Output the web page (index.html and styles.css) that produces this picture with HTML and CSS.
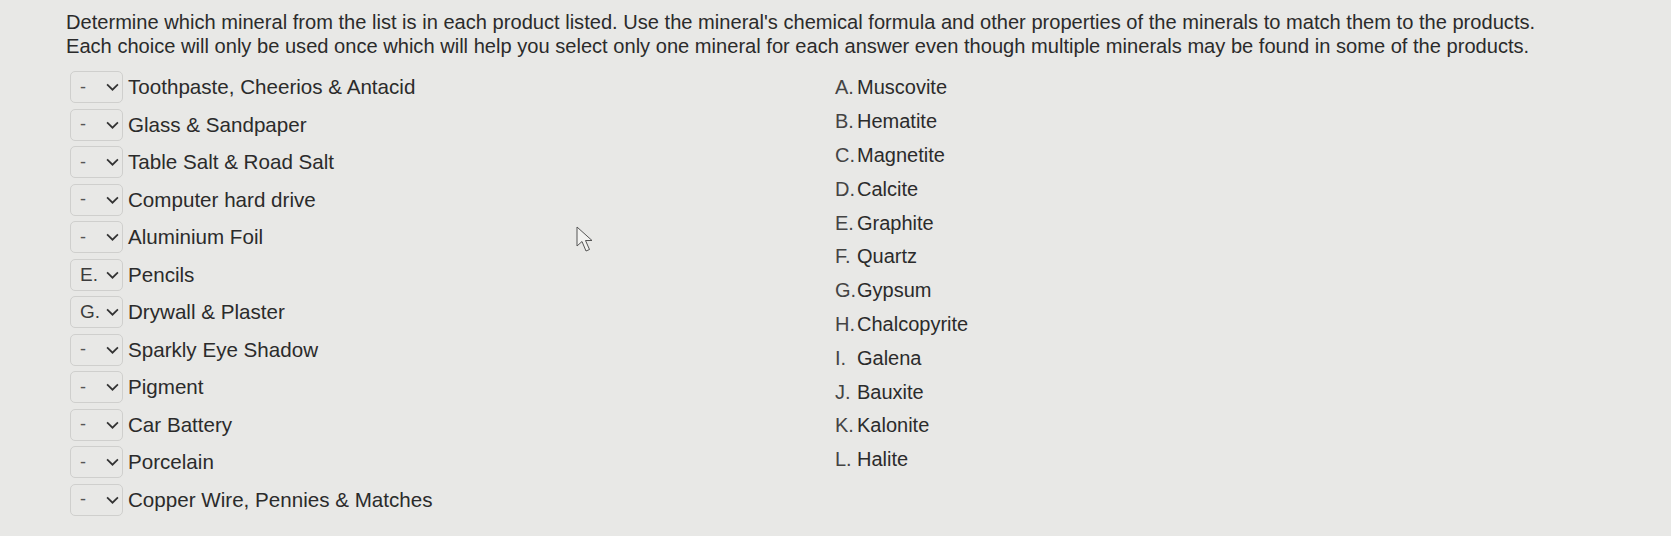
FILE: index.html
```html
<!DOCTYPE html>
<html lang="en">
<head>
<meta charset="utf-8">
<title>Mineral matching</title>
<link rel="stylesheet" href="styles.css">
</head>
<body>
<div class="page">
  <p class="intro">Determine which mineral from the list is in each product listed. Use the mineral's chemical formula and other properties of the minerals to match them to the products.<br>Each choice will only be used once which will help you select only one mineral for each answer even though multiple minerals may be found in some of the products.</p>
  <div class="match">
    <ul class="products">
      <li class="row"><span class="select"><span class="val">-</span><svg class="chev" viewBox="0 0 12 7"><polyline points="1,1 6,6 11,1"/></svg></span><span class="label">Toothpaste, Cheerios &amp; Antacid</span></li>
      <li class="row"><span class="select"><span class="val">-</span><svg class="chev" viewBox="0 0 12 7"><polyline points="1,1 6,6 11,1"/></svg></span><span class="label">Glass &amp; Sandpaper</span></li>
      <li class="row"><span class="select"><span class="val">-</span><svg class="chev" viewBox="0 0 12 7"><polyline points="1,1 6,6 11,1"/></svg></span><span class="label">Table Salt &amp; Road Salt</span></li>
      <li class="row"><span class="select"><span class="val">-</span><svg class="chev" viewBox="0 0 12 7"><polyline points="1,1 6,6 11,1"/></svg></span><span class="label">Computer hard drive</span></li>
      <li class="row"><span class="select"><span class="val">-</span><svg class="chev" viewBox="0 0 12 7"><polyline points="1,1 6,6 11,1"/></svg></span><span class="label">Aluminium Foil</span></li>
      <li class="row"><span class="select"><span class="val set">E.</span><svg class="chev" viewBox="0 0 12 7"><polyline points="1,1 6,6 11,1"/></svg></span><span class="label">Pencils</span></li>
      <li class="row"><span class="select"><span class="val set">G.</span><svg class="chev" viewBox="0 0 12 7"><polyline points="1,1 6,6 11,1"/></svg></span><span class="label">Drywall &amp; Plaster</span></li>
      <li class="row"><span class="select"><span class="val">-</span><svg class="chev" viewBox="0 0 12 7"><polyline points="1,1 6,6 11,1"/></svg></span><span class="label">Sparkly Eye Shadow</span></li>
      <li class="row"><span class="select"><span class="val">-</span><svg class="chev" viewBox="0 0 12 7"><polyline points="1,1 6,6 11,1"/></svg></span><span class="label">Pigment</span></li>
      <li class="row"><span class="select"><span class="val">-</span><svg class="chev" viewBox="0 0 12 7"><polyline points="1,1 6,6 11,1"/></svg></span><span class="label">Car Battery</span></li>
      <li class="row"><span class="select"><span class="val">-</span><svg class="chev" viewBox="0 0 12 7"><polyline points="1,1 6,6 11,1"/></svg></span><span class="label">Porcelain</span></li>
      <li class="row"><span class="select"><span class="val">-</span><svg class="chev" viewBox="0 0 12 7"><polyline points="1,1 6,6 11,1"/></svg></span><span class="label">Copper Wire, Pennies &amp; Matches</span></li>
    </ul>
    <ol class="minerals">
      <li><span class="letter">A.</span>Muscovite</li>
      <li><span class="letter">B.</span>Hematite</li>
      <li><span class="letter">C.</span>Magnetite</li>
      <li><span class="letter">D.</span>Calcite</li>
      <li><span class="letter">E.</span>Graphite</li>
      <li><span class="letter">F.</span>Quartz</li>
      <li><span class="letter">G.</span>Gypsum</li>
      <li><span class="letter">H.</span>Chalcopyrite</li>
      <li><span class="letter">I.</span>Galena</li>
      <li><span class="letter">J.</span>Bauxite</li>
      <li><span class="letter">K.</span>Kalonite</li>
      <li><span class="letter">L.</span>Halite</li>
    </ol>
  </div>
  <svg class="cursor" viewBox="0 0 18 28" width="18" height="28"><path d="M1 1 L1 20 L6 15.5 L10 25 L13.5 23.5 L9.5 14.5 L16 14.5 Z"/></svg>
</div>
</body>
</html>
```
FILE: styles.css
```css
html, body {
  margin: 0;
  padding: 0;
  background: #e8e8e6;
}
body {
  font-family: "Liberation Sans", Arial, sans-serif;
  color: #2b2b2b;
}
.page {
  position: relative;
  width: 1671px;
  height: 536px;
  padding: 10px 0 0 66px;
  box-sizing: border-box;
  overflow: hidden;
}
.intro {
  margin: 0;
  font-size: 20.1px;
  line-height: 24px;
  white-space: nowrap;
}
.match {
  display: grid;
  grid-template-columns: 767px auto;
  margin-top: 13px;
}
.products, .minerals {
  list-style: none;
  margin: 0;
  padding: 0;
}
.products {
  padding-left: 4px;
  display: flex;
  flex-direction: column;
  gap: 5.5px;
}
.row {
  display: flex;
  align-items: center;
  height: 32px;
  font-size: 20.6px;
}
.select {
  display: flex;
  align-items: center;
  width: 53px;
  height: 32px;
  box-sizing: border-box;
  border: 1px solid #cfcfcd;
  border-radius: 5px;
  padding-left: 9px;
  margin-right: 5px;
}
.val {
  width: 26px;
  font-size: 18px;
  color: #555;
}
.val.set {
  color: #3c3c3c;
  font-size: 19px;
}
.chev {
  width: 13px;
  height: 8px;
}
.chev polyline {
  fill: none;
  stroke: #333;
  stroke-width: 1.6;
}
.minerals li {
  height: 33.8px;
  display: flex;
  align-items: center;
  font-size: 20px;
}
.letter {
  width: 22px;
  color: #444;
}
.minerals li {
  padding-left: 2px;
}
.cursor {
  position: absolute;
  left: 576px;
  top: 226px;
}
.cursor path {
  fill: #f2f2f0;
  stroke: #555;
  stroke-width: 1;
  stroke-linejoin: round;
}
```
